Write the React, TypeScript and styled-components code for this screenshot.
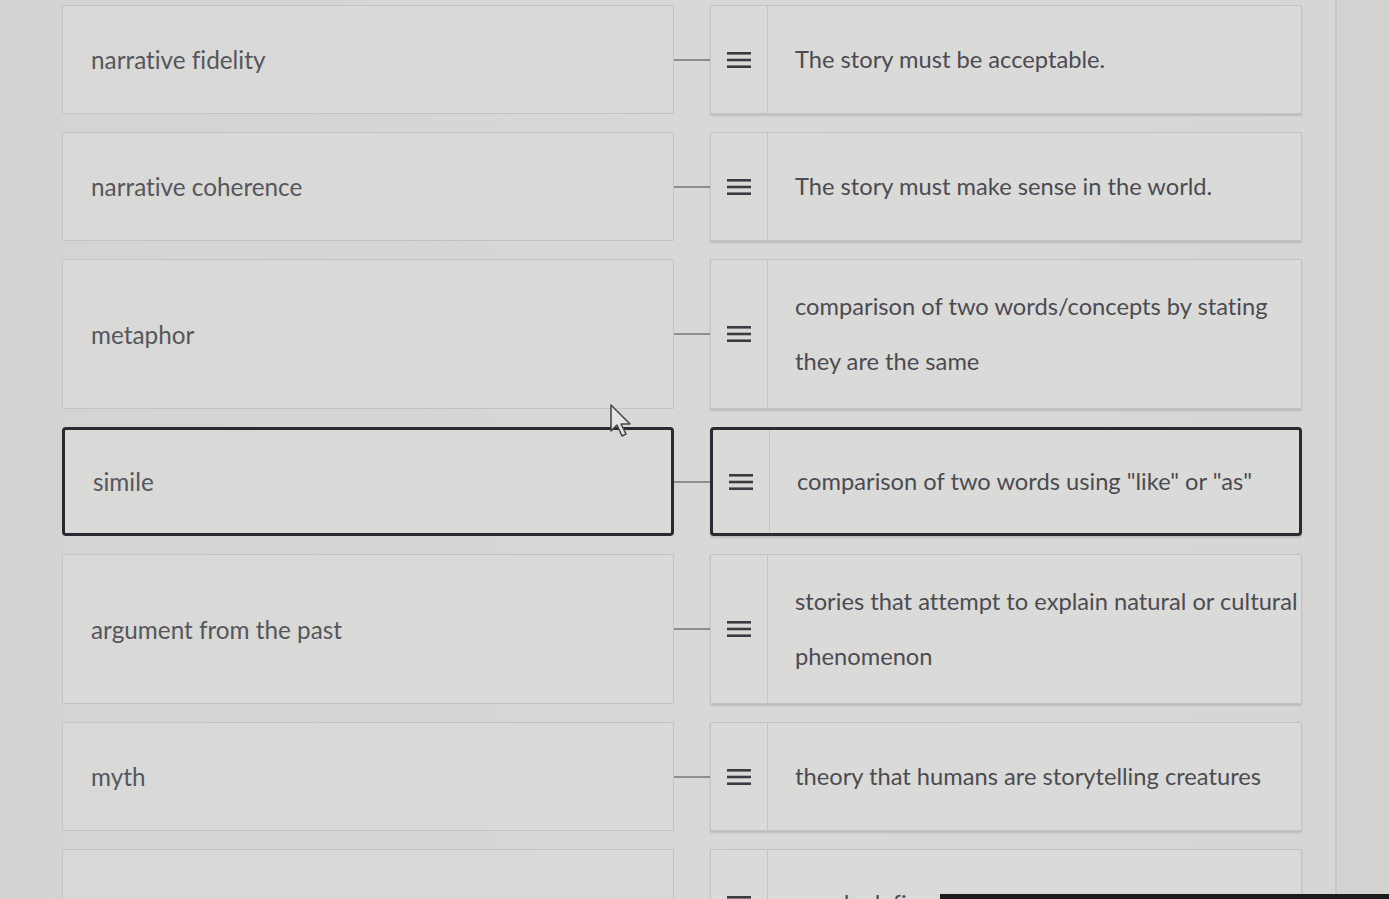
import styled, { createGlobalStyle } from "styled-components";

const GlobalStyle = createGlobalStyle`
    html, body {
        margin: 0;
        padding: 0;
        background-color: #d5d5d3;
        font-family: Lato, "Open Sans", "Liberation Sans", sans-serif;
        font-variant-ligatures: none;
        overflow: hidden;
    }
`;

const Screen = styled.div`
    position: relative;
    display: flex;
    width: 1389px;
    height: 899px;
    overflow: hidden;
    background: linear-gradient(90deg, #d3d3d1 0%, #d8d8d6 50%, #d6d6d4 100%);
`;

const Main = styled.div`
    width: 1337px;
    border-right: 2px solid #c6c6c4;
    padding: 5px 0 0 62px;
    box-sizing: border-box;
    display: flex;
    flex-direction: column;
    gap: 18px;
`;

const Side = styled.div`
    flex: 1;
    background-color: #d2d2d0;
`;

const Row = styled.div`
    display: grid;
    grid-template-columns: 612px 36px 592px;
    min-height: 109px;
    flex-shrink: 0;
`;

const TermCard = styled.div<{ $selected?: boolean }>`
    display: flex;
    align-items: center;
    padding: 0 28px;
    background-color: #d9d9d7;
    border: ${(p) => (p.$selected ? "3px solid #2e2832" : "1px solid #c3c3c1")};
    border-radius: ${(p) => (p.$selected ? "4px" : "1px")};
    color: #56565c;
    font-size: 24.3px;
    box-sizing: border-box;
`;

const Connector = styled.div`
    display: flex;
    align-items: center;
`;

const Line = styled.div`
    width: 100%;
    height: 2px;
    background-color: #8e8e90;
`;

const MatchCard = styled.div<{ $selected?: boolean }>`
    display: flex;
    background-color: #dadad8;
    border: ${(p) => (p.$selected ? "3px solid #2e2832" : "1px solid #c3c3c1")};
    border-radius: ${(p) => (p.$selected ? "4px" : "1px")};
    box-shadow: 0 2px 2px rgba(0, 0, 0, 0.12);
    box-sizing: border-box;
`;

const Handle = styled.div`
    width: 56px;
    flex-shrink: 0;
    display: flex;
    align-items: center;
    justify-content: center;
    border-right: 1px solid #c6c6c4;
`;

const Answer = styled.div`
    flex: 1;
    display: flex;
    align-items: center;
    padding: 19px 0 19px 27px;
    color: #4c4b52;
    font-size: 23.7px;
    line-height: 55px;
`;

const Bezel = styled.div`
    position: absolute;
    left: 940px;
    right: 0;
    bottom: 0;
    height: 5px;
    background-color: #1c1c1e;
`;

const Cursor = styled.svg`
    position: absolute;
    left: 609px;
    top: 403px;
`;

function GripIcon() {
    return (
        <svg width="26" height="18" viewBox="0 0 26 18">
            <rect x="1" y="1" width="24" height="2.6" fill="#3c3b42" />
            <rect x="1" y="7.7" width="24" height="2.6" fill="#3c3b42" />
            <rect x="1" y="14.4" width="24" height="2.6" fill="#3c3b42" />
        </svg>
    );
}

const pairs = [
    { term: "narrative fidelity", answer: "The story must be acceptable." },
    { term: "narrative coherence", answer: "The story must make sense in the world." },
    { term: "metaphor", answer: "comparison of two words/concepts by stating they are the same" },
    { term: "simile", answer: 'comparison of two words using "like" or "as"', selected: true },
    { term: "argument from the past", answer: "stories that attempt to explain natural or cultural phenomenon" },
    { term: "myth", answer: "theory that humans are storytelling creatures" },
    { term: "", answer: "poorly defined terms used" },
];

export default function App() {
    return (
        <>
            <GlobalStyle />
            <Screen>
                <Main>
                    {pairs.map((p, i) => (
                        <Row key={i}>
                            <TermCard $selected={p.selected}>{p.term}</TermCard>
                            <Connector>
                                <Line />
                            </Connector>
                            <MatchCard $selected={p.selected}>
                                <Handle>
                                    <GripIcon />
                                </Handle>
                                <Answer>{p.answer}</Answer>
                            </MatchCard>
                        </Row>
                    ))}
                </Main>
                <Side />
                <Cursor width="26" height="36" viewBox="0 0 26 36">
                    <path
                        d="M2 2 L2 28 L8 22 L13 33 L17 31 L12 21 L21 21 Z"
                        fill="#e4e4e2"
                        stroke="#4a4a4e"
                        strokeWidth="1.6"
                        strokeLinejoin="round"
                    />
                </Cursor>
                <Bezel />
            </Screen>
        </>
    );
}
